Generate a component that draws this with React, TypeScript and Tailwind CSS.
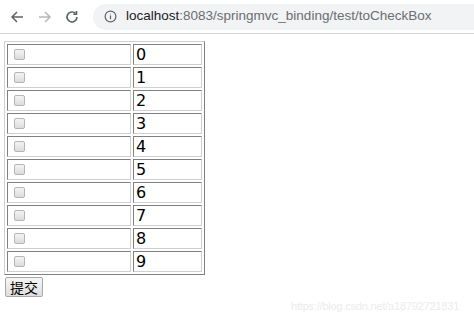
import React from 'react';

const rows = [0, 1, 2, 3, 4, 5, 6, 7, 8, 9];

export default function App() {
  return (
    <div className="relative h-[319px] w-[474px] overflow-hidden bg-white font-['DejaVu_Sans',sans-serif]">
      {/* browser bar */}
      <div className="flex h-[34px] items-center border-b border-[#d6d6d6] bg-white">
        <div className="flex w-[93px] items-center pl-[9px] text-[#5f6368]">
          <svg width="16" height="16" viewBox="0 0 16 16" fill="none" stroke="#5f6368" strokeWidth="1.5">
            <path d="M14 8H3M8 3L3 8l5 5" />
          </svg>
          <svg className="ml-[12px]" width="16" height="16" viewBox="0 0 16 16" fill="none" stroke="#b8b8b8" strokeWidth="1.5">
            <path d="M2 8h11M8 3l5 5-5 5" />
          </svg>
          <svg className="ml-[11px]" width="16" height="16" viewBox="0 0 16 16" fill="none" stroke="#5f6368" strokeWidth="1.6">
            <path d="M13 8a5 5 0 1 1-1.5-3.6" />
            <path d="M12.5 2v3.2H9.3" />
          </svg>
        </div>
        <div className="flex h-[26px] flex-1 items-center rounded-l-full bg-[#f1f3f4] pl-[11px] text-[13.5px] font-['Liberation_Sans',sans-serif]">
          <svg width="13" height="13" viewBox="0 0 14 14" fill="none" stroke="#5f6368" strokeWidth="1.3">
            <circle cx="7" cy="7" r="5.8" />
            <path d="M7 6v4M7 4v0.6" />
          </svg>
          <span className="ml-[9px] text-[#202124]">localhost</span>
          <span className="text-[#6b6e72]">:8083/springmvc_binding/test/toCheckBox</span>
        </div>
      </div>

      {/* form */}
      <div className="pl-[4px] pt-[7px]">
        <table className="table-fixed border-separate border-spacing-[2px] border border-t-[#d0d0d0] border-l-[#d0d0d0] border-r-[#808080] border-b-[#808080]">
          <tbody>
            {rows.map((n) => (
              <tr key={n}>
                <td className="h-[21px] w-[124px] border border-t-[#808080] border-l-[#808080] border-r-[#d0d0d0] border-b-[#d0d0d0] p-0 pl-[6px] align-middle">
                  <span className="block h-[11px] w-[11px] rounded-[2px] border border-[#b5b5b5] bg-gradient-to-b from-[#f4f4f4] to-[#dcdcdc]" />
                </td>
                <td className="h-[21px] w-[69px] border border-t-[#808080] border-l-[#808080] border-r-[#d0d0d0] border-b-[#d0d0d0] p-0 pl-[2px] align-middle text-[16px] leading-[19px] text-black">
                  {n}
                </td>
              </tr>
            ))}
          </tbody>
        </table>
        <button className="ml-[1px] mt-[2px] h-[20px] rounded-[2px] border border-[#a8a8a8] bg-gradient-to-b from-[#f6f6f6] to-[#dedede] px-[4px] text-[14px] leading-[17px] text-black font-['Noto_Sans_CJK_SC',sans-serif]">
          提交
        </button>
      </div>

      <div className="absolute left-[291px] top-[298px] text-[11px] tracking-[-0.2px] text-[#ececec] font-['Liberation_Sans',sans-serif]">
        https://blog.csdn.net/a18792721831
      </div>
    </div>
  );
}
